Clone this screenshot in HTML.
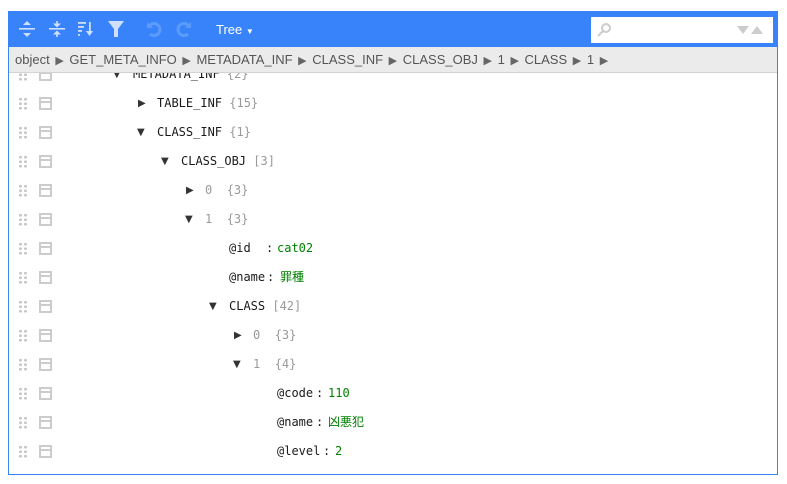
<!DOCTYPE html>
<html><head><meta charset="utf-8"><style>
*{margin:0;padding:0;box-sizing:border-box}
body{width:787px;height:484px;background:#fff;position:relative;overflow:hidden;font-family:"Liberation Sans",Arial,sans-serif}
#ed{position:absolute;left:8px;top:11px;width:770px;height:464px;border:1px solid #3883fa;overflow:hidden}
#menu{position:absolute;left:0;top:0;width:768px;height:35px;background:#3883fa}
#nav{position:absolute;left:0;top:35px;width:768px;height:26px;background:#ebebeb;border-bottom:1px solid #d3d3d3;font-size:13px;color:#555;line-height:25px;padding-left:6px;white-space:nowrap}
#nav b{font-weight:normal;font-size:11px;color:#666;margin:0 2px}
#tree{position:absolute;left:0;top:61px;width:768px;height:402px;overflow:hidden}
.r{position:absolute;left:0;height:29px;width:768px;font-family:"DejaVu Sans Mono","Liberation Mono","Noto Sans CJK JP",monospace;font-size:12px;line-height:29px;color:#1a1a1a}
.d{position:absolute;left:9px;top:8px;width:10px;height:14px;background-image:radial-gradient(#c8c8c8 1.6px,transparent 1.7px);background-size:5px 4.5px}
.c{position:absolute;left:30px;top:8px;width:13px;height:13px;border:2px solid #ccc}
.c:after{content:"";position:absolute;left:0;right:0;top:2px;border-top:2px solid #ccc}
.t{position:absolute;top:0;font-size:10px;color:#333;font-family:"DejaVu Sans",sans-serif}
.k{position:absolute;top:0;white-space:pre}
.s{position:absolute;top:0}
.n{color:#999}
.v{color:#008000;position:absolute;top:0;white-space:pre}
.ic{position:absolute;top:6px}
</style></head><body>
<div id="ed">
<div id="menu">
<svg class="ic" style="left:7px" width="22" height="22" viewBox="0 0 22 22" fill="#cfe0ff"><path d="M11 3l-4 4h8zM11 19l-4-4h8z"/><rect x="3" y="10" width="16" height="1.6"/></svg>
<svg class="ic" style="left:37px" width="22" height="22" viewBox="0 0 22 22" fill="#cfe0ff"><path d="M11 9.5l-4-4h8zM11 12.5l-4 4h8z"/><rect x="3" y="10" width="16" height="1.6"/><rect x="10.2" y="3" width="1.6" height="3"/><rect x="10.2" y="16" width="1.6" height="3"/></svg>
<svg class="ic" style="left:66px" width="22" height="22" viewBox="0 0 22 22" fill="#cfe0ff"><rect x="3" y="4" width="8" height="1.8"/><rect x="3" y="8" width="6" height="1.8"/><rect x="3" y="12" width="4" height="1.8"/><rect x="3" y="16" width="2" height="1.8"/><rect x="14" y="4" width="1.8" height="10"/><path d="M11 13h7l-3.5 5z"/></svg>
<svg class="ic" style="left:96px" width="22" height="22" viewBox="0 0 22 22" fill="#cfe0ff"><path d="M3 3h16l-6 8v8h-4v-8z"/></svg>
<svg class="ic" style="left:134px" width="22" height="22" viewBox="0 0 22 22" fill="none" stroke="#5b9bfb" stroke-width="3"><path d="M7 7a6 6 0 1 1 0 9"/><path d="M4 4v6h6" fill="#5b9bfb" stroke="none"/></svg>
<svg class="ic" style="left:164px" width="22" height="22" viewBox="0 0 22 22" fill="none" stroke="#5b9bfb" stroke-width="3"><path d="M15 7a6 6 0 1 0 0 9"/><path d="M18 4v6h-6" fill="#5b9bfb" stroke="none"/></svg>
<div style="position:absolute;left:207px;top:0;line-height:35px;color:#fff;font-size:13px">Tree <span style="font-size:8px">▼</span></div>
<div style="position:absolute;left:582px;top:5px;width:182px;height:26px;background:#fff">
<svg style="position:absolute;left:5px;top:5px" width="16" height="16" viewBox="0 0 16 16" fill="none" stroke="#ccc" stroke-width="2"><circle cx="10" cy="6" r="4"/><path d="M7 9l-5 5"/></svg>
<svg style="position:absolute;left:146px;top:8px" width="30" height="10" viewBox="0 0 30 10" fill="#ccc"><path d="M0 1h12l-6 8zM14 9h12l-6-8z"/></svg>
</div>
</div>
<div id="nav">object <b>▶</b> GET_META_INFO <b>▶</b> METADATA_INF <b>▶</b> CLASS_INF <b>▶</b> CLASS_OBJ <b>▶</b> 1 <b>▶</b> CLASS <b>▶</b> 1 <b>▶</b></div>
<div id="tree">
<div class="r" style="top:-13px"><i class="d"></i><i class="c"></i><span class="t" style="left:104px">▼</span><span class="k" style="left:124px">METADATA_INF <span class="n">{2}</span></span></div>
<div class="r" style="top:16px"><i class="d"></i><i class="c"></i><span class="t" style="left:129px">▶</span><span class="k" style="left:148px">TABLE_INF <span class="n">{15}</span></span></div>
<div class="r" style="top:45px"><i class="d"></i><i class="c"></i><span class="t" style="left:128px">▼</span><span class="k" style="left:148px">CLASS_INF <span class="n">{1}</span></span></div>
<div class="r" style="top:74px"><i class="d"></i><i class="c"></i><span class="t" style="left:152px">▼</span><span class="k" style="left:172px">CLASS_OBJ <span class="n">[3]</span></span></div>
<div class="r" style="top:103px"><i class="d"></i><i class="c"></i><span class="t" style="left:177px">▶</span><span class="k" style="left:196px"><span class="n">0</span>  <span class="n">{3}</span></span></div>
<div class="r" style="top:132px"><i class="d"></i><i class="c"></i><span class="t" style="left:176px">▼</span><span class="k" style="left:196px"><span class="n">1</span>  <span class="n">{3}</span></span></div>
<div class="r" style="top:161px"><i class="d"></i><i class="c"></i><span class="k" style="left:220px">@id</span><span class="s" style="left:257px">:</span><span class="v" style="left:268px">cat02</span></div>
<div class="r" style="top:190px"><i class="d"></i><i class="c"></i><span class="k" style="left:220px">@name</span><span class="s" style="left:258px">:</span><span class="v" style="left:271px">罪種</span></div>
<div class="r" style="top:219px"><i class="d"></i><i class="c"></i><span class="t" style="left:200px">▼</span><span class="k" style="left:220px">CLASS <span class="n">[42]</span></span></div>
<div class="r" style="top:248px"><i class="d"></i><i class="c"></i><span class="t" style="left:225px">▶</span><span class="k" style="left:244px"><span class="n">0</span>  <span class="n">{3}</span></span></div>
<div class="r" style="top:277px"><i class="d"></i><i class="c"></i><span class="t" style="left:224px">▼</span><span class="k" style="left:244px"><span class="n">1</span>  <span class="n">{4}</span></span></div>
<div class="r" style="top:306px"><i class="d"></i><i class="c"></i><span class="k" style="left:268px">@code</span><span class="s" style="left:307px">:</span><span class="v" style="left:319px">110</span></div>
<div class="r" style="top:335px"><i class="d"></i><i class="c"></i><span class="k" style="left:268px">@name</span><span class="s" style="left:307px">:</span><span class="v" style="left:319px">凶悪犯</span></div>
<div class="r" style="top:364px"><i class="d"></i><i class="c"></i><span class="k" style="left:268px">@level</span><span class="s" style="left:314px">:</span><span class="v" style="left:326px">2</span></div>
<div class="r" style="top:393px"><i class="d"></i><i class="c"></i></div>
</div>
</div>
</body></html>
